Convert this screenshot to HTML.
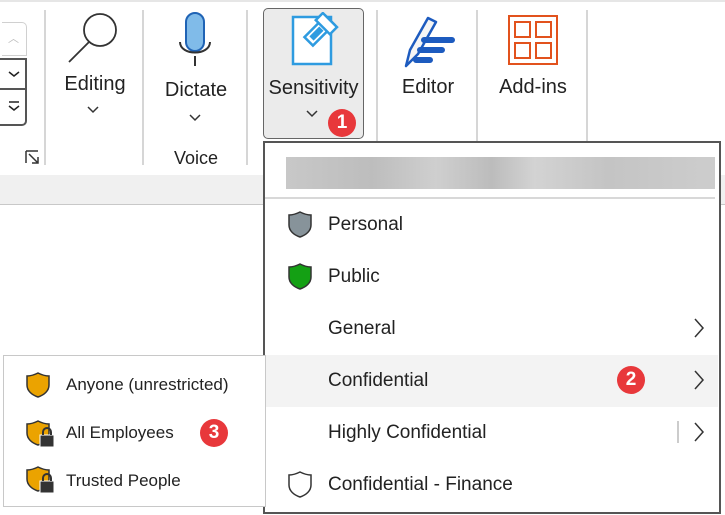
<!DOCTYPE html>
<html><head><meta charset="utf-8"><style>
*{margin:0;padding:0;box-sizing:border-box}
body{width:725px;height:515px;position:relative;overflow:hidden;background:#fff;font-family:"Segoe UI","Liberation Sans","DejaVu Sans",sans-serif;color:#222}
.a{position:absolute}
.sep{position:absolute;top:10px;width:2px;height:155px;background:#d6d6d6}
.lbl{position:absolute;font-size:20px;color:#222;text-align:center}
.badge{position:absolute;width:28px;height:28px;border-radius:50%;background:#e8383b;color:#fff;font-weight:bold;font-size:19px;text-align:center;line-height:28px;font-family:"Liberation Sans",sans-serif}
.mi{position:absolute;left:328px;font-size:19px;color:#222}
.si{position:absolute;left:66px;font-size:17px;color:#222}
</style></head><body>
<div class="a" style="left:0;top:0;width:725px;height:2px;background:#e6e6e6"></div>
<div class="a" style="left:2px;top:22px;width:25px;height:34px;border:1px solid #d0d0d0;border-radius:0 5px 0 0;border-left:none"></div>
<div class="a" style="left:8px;top:30px;font-size:11px;color:#bbb">︿</div>
<div class="a" style="left:0;top:58px;width:27px;height:32px;border:2px solid #555;border-left:none"></div>
<div class="a" style="left:0;top:90px;width:27px;height:36px;border:2px solid #555;border-left:none;border-top:none;border-radius:0 0 5px 0"></div>
<svg class="a" style="left:6px;top:66px" width="16" height="50"><path d="M3 6l5 4 5-4" stroke="#222" stroke-width="1.5" fill="none"/><path d="M3 36h10M3 40l5 4 5-4" stroke="#222" stroke-width="1.5" fill="none"/></svg>
<svg class="a" style="left:25px;top:150px" width="14" height="14"><path d="M1 1v12M1 1h12M4 4l9 9M13 7v6H7" stroke="#333" stroke-width="1.5" fill="none"/></svg>
<div class="sep" style="left:44px"></div>
<div class="sep" style="left:142px"></div>
<div class="sep" style="left:246px"></div>
<div class="sep" style="left:376px"></div>
<div class="sep" style="left:476px"></div>
<div class="sep" style="left:586px"></div>
<svg class="a" style="left:65px;top:10px" width="60" height="55"><circle cx="35" cy="20" r="16" fill="#fff" stroke="#333" stroke-width="1.8"/><path d="M24 32L4 52" stroke="#333" stroke-width="1.8"/></svg>
<div class="lbl" style="left:55px;top:73px;width:80px">Editing</div>
<svg class="a" style="left:87px;top:106px" width="12" height="8"><path d="M1 1l5 5 5-5" stroke="#333" stroke-width="1.5" fill="none"/></svg>
<svg class="a" style="left:176px;top:12px" width="40" height="56"><rect x="10" y="1" width="18" height="38" rx="9" fill="#80bbe9" stroke="#1f63b5" stroke-width="2"/><path d="M4 30c0 14 30 14 30 0M19 44v10" stroke="#333" stroke-width="2" fill="none"/></svg>
<div class="lbl" style="left:150px;top:79px;width:92px">Dictate</div>
<svg class="a" style="left:189px;top:114px" width="12" height="8"><path d="M1 1l5 5 5-5" stroke="#333" stroke-width="1.5" fill="none"/></svg>
<div class="lbl" style="left:150px;top:148px;width:92px;font-size:18px">Voice</div>
<div class="a" style="left:263px;top:8px;width:101px;height:131px;background:#ebebeb;border:1.5px solid #666;border-radius:5px"></div>
<svg class="a" style="left:290px;top:12px" width="56" height="56"><rect x="3" y="5" width="38" height="47" fill="#fff" stroke="#2e9be0" stroke-width="2.5"/><g transform="rotate(-45 30 18)"><rect x="14" y="12" width="30" height="12" fill="#fff" stroke="#2e9be0" stroke-width="2.5"/><rect x="18" y="15" width="14" height="6" fill="#2e9be0"/><rect x="34" y="8" width="10" height="20" fill="#fff" stroke="#2e9be0" stroke-width="2.5"/></g></svg>
<div class="lbl" style="left:263px;top:77px;width:101px">Sensitivity</div>
<svg class="a" style="left:306px;top:110px" width="12" height="8"><path d="M1 1l5 5 5-5" stroke="#333" stroke-width="1.5" fill="none"/></svg>
<div class="badge" style="left:328px;top:109px">1</div>
<svg class="a" style="left:398px;top:12px" width="60" height="56"><path d="M8 54l4-16L30 6l8 4-18 32z" fill="#f5f5f5" stroke="#1d5bbf" stroke-width="2.5" stroke-linejoin="round"/><path d="M26 28h28M22 38h22M18 48h14" stroke="#1d5bbf" stroke-width="6" stroke-linecap="round"/></svg>
<div class="lbl" style="left:388px;top:76px;width:80px">Editor</div>
<svg class="a" style="left:508px;top:15px" width="52" height="52"><rect x="1" y="1" width="48" height="48" fill="none" stroke="#e2521d" stroke-width="2"/><g fill="none" stroke="#e2521d" stroke-width="2"><rect x="7" y="7" width="15" height="15"/><rect x="28" y="7" width="15" height="15"/><rect x="7" y="28" width="15" height="15"/><rect x="28" y="28" width="15" height="15"/></g></svg>
<div class="lbl" style="left:488px;top:76px;width:90px">Add-ins</div>
<div class="a" style="left:0;top:175px;width:725px;height:30px;background:#f0f0f0;border-bottom:1.5px solid #c8c8c8"></div>
<div class="a" style="left:263px;top:141px;width:458px;height:373px;background:#fff;border:2px solid #555"></div>
<div class="a" style="left:286px;top:157px;width:429px;height:32px;background:linear-gradient(90deg,#c8c8c8,#bdbdbd 20%,#cfcfcf 35%,#bcbcbc 48%,#d3d3d3 58%,#c4c4c4 75%,#cdcdcd)"></div>
<div class="a" style="left:265px;top:197px;width:450px;height:1.5px;background:#d8d8d8"></div>
<div class="a" style="left:266px;top:355px;width:452px;height:52px;background:#f3f3f3"></div>
<svg class="a" style="left:287px;top:210px" width="26" height="28"><path d="M13 2c4 2 7 3 11 3v10c0 6-5 10-11 12C7 25 2 21 2 15V5c4 0 7-1 11-3z" fill="#87939a" stroke="#333" stroke-width="1.5"/></svg>
<div class="mi" style="top:214px">Personal</div>
<svg class="a" style="left:287px;top:262px" width="26" height="28"><path d="M13 2c4 2 7 3 11 3v10c0 6-5 10-11 12C7 25 2 21 2 15V5c4 0 7-1 11-3z" fill="#14a014" stroke="#333" stroke-width="1.5"/></svg>
<div class="mi" style="top:266px">Public</div>
<div class="mi" style="top:318px">General</div>
<svg class="a" style="left:693px;top:318px" width="12" height="20"><path d="M2 1l8 9-8 9" stroke="#333" stroke-width="1.5" fill="none"/></svg>
<div class="mi" style="top:370px">Confidential</div>
<div class="badge" style="left:617px;top:366px">2</div>
<svg class="a" style="left:693px;top:370px" width="12" height="20"><path d="M2 1l8 9-8 9" stroke="#333" stroke-width="1.5" fill="none"/></svg>
<div class="mi" style="top:422px">Highly Confidential</div>
<div class="a" style="left:677px;top:421px;width:2px;height:22px;background:#ccc"></div>
<svg class="a" style="left:693px;top:422px" width="12" height="20"><path d="M2 1l8 9-8 9" stroke="#333" stroke-width="1.5" fill="none"/></svg>
<svg class="a" style="left:287px;top:470px" width="26" height="28"><path d="M13 2c4 2 7 3 11 3v10c0 6-5 10-11 12C7 25 2 21 2 15V5c4 0 7-1 11-3z" fill="#fff" stroke="#333" stroke-width="1.5"/></svg>
<div class="mi" style="top:474px">Confidential - Finance</div>
<div class="a" style="left:3px;top:355px;width:263px;height:152px;background:#fff;border:1.5px solid #c8c8c8"></div>
<svg class="a" style="left:26px;top:371px" width="28" height="28"><path d="M12 2c4 2 7 3 11 3v9c0 6-5 10-11 12C6 24 1 20 1 14V5c4 0 7-1 11-3z" fill="#eba300" stroke="#333" stroke-width="1.5"/></svg>
<div class="si" style="top:375px">Anyone (unrestricted)</div>
<svg class="a" style="left:26px;top:419px" width="30" height="30"><path d="M12 2c4 2 7 3 11 3v9c0 6-5 10-11 12C6 24 1 20 1 14V5c4 0 7-1 11-3z" fill="#eba300" stroke="#333" stroke-width="1.5"/><rect x="14" y="16" width="14" height="12" fill="#333" stroke="#fff" stroke-width="1"/><path d="M17 16v-3a4 4 0 018 0v3" stroke="#333" stroke-width="2" fill="none"/></svg>
<div class="si" style="top:423px">All Employees</div>
<div class="badge" style="left:200px;top:419px">3</div>
<svg class="a" style="left:26px;top:465px" width="30" height="30"><path d="M12 2c4 2 7 3 11 3v9c0 6-5 10-11 12C6 24 1 20 1 14V5c4 0 7-1 11-3z" fill="#eba300" stroke="#333" stroke-width="1.5"/><rect x="14" y="16" width="14" height="12" fill="#333" stroke="#fff" stroke-width="1"/><path d="M17 16v-3a4 4 0 018 0v3" stroke="#333" stroke-width="2" fill="none"/></svg>
<div class="si" style="top:471px">Trusted People</div>
</body></html>
